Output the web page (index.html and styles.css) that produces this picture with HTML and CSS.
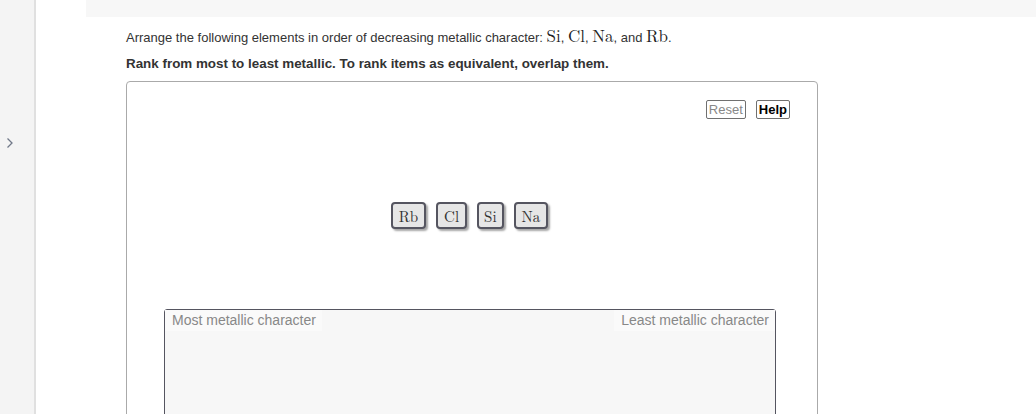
FILE: index.html
```html
<!DOCTYPE html>
<html>
<head>
<meta charset="utf-8">
<link rel="stylesheet" href="styles.css">
</head>
<body>
<div class="page">
  <aside class="sidebar">
    <svg class="chev" width="8" height="12" viewBox="0 0 8 12"><polyline points="1.5,1.5 6,6 1.5,10.5" fill="none" stroke="#707888" stroke-width="1.3"/></svg>
  </aside>
  <main class="main">
    <div class="topband"></div>
    <div class="content">
      <p class="q">Arrange the following elements in order of decreasing metallic character: <span class="m">Si</span>, <span class="m">Cl</span>, <span class="m">Na</span>, and <span class="m">Rb</span>.</p>
      <p class="instr">Rank from most to least metallic. To rank items as equivalent, overlap them.</p>
      <div class="panel">
        <div class="tools">
          <button class="btn reset">Reset</button>
          <button class="btn help">Help</button>
        </div>
        <div class="tiles">
          <span class="tile">Rb</span>
          <span class="tile">Cl</span>
          <span class="tile">Si</span>
          <span class="tile">Na</span>
        </div>
        <div class="zone">
          <span class="lbl">Most metallic character</span>
          <span class="lbl">Least metallic character</span>
        </div>
      </div>
    </div>
  </main>
</div>
</body>
</html>
```

FILE: styles.css
```css
html, body {
  margin: 0;
  padding: 0;
  background: #fff;
  height: 100%;
  overflow: hidden;
}
.page {
  display: flex;
  height: 414px;
  overflow: hidden;
  font-family: "Liberation Sans", Arial, sans-serif;
  color: #333;
}
.sidebar {
  width: 34px;
  flex: none;
  background: #f4f4f4;
  border-right: 2px solid #e0e0e0;
}
.chev {
  display: block;
  margin: 137px 0 0 6px;
}
.main {
  flex: 1;
  display: flex;
  flex-direction: column;
  min-height: 0;
}
.topband {
  flex: none;
  height: 17px;
  margin-left: 50px;
  background: #f7f7f7;
}
.content {
  flex: none;
  padding-left: 90px;
}
.q {
  margin: 8px 0 0 0;
  font-size: 13px;
  line-height: 20px;
  color: #333;
}
.m {
  font-family: "Latin Modern Roman", "Liberation Serif", "DejaVu Serif", serif;
  font-size: 17px;
  color: #222;
}
.instr {
  margin: 6px 0 0 0;
  font-size: 13.4px;
  line-height: 20px;
  font-weight: bold;
  color: #333;
}
.panel {
  margin-top: 7px;
  width: 692px;
  height: 400px;
  border: 1px solid #aaa;
  border-radius: 4px;
  box-sizing: border-box;
  display: flex;
  flex-direction: column;
}
.tools {
  display: flex;
  justify-content: flex-end;
  gap: 10px;
  padding: 18px 27px 0 0;
}
.btn {
  font-family: "Liberation Sans", Arial, sans-serif;
  font-size: 13px;
  line-height: 15px;
  padding: 1px 2px;
  background: #fff;
  border: 1px solid #707070;
  border-radius: 2px;
  height: 19px;
  box-sizing: border-box;
}
.reset { color: #888; }
.help { color: #000; font-weight: bold; }
.tiles {
  display: flex;
  justify-content: center;
  gap: 10px;
  margin-top: 83px;
  padding-right: 5px;
}
.tile {
  font-family: "Latin Modern Roman", "Liberation Serif", "DejaVu Serif", serif;
  font-size: 15px;
  line-height: 23px;
  color: #333;
  background: #e6e6e6;
  border: 2px solid #555560;
  border-radius: 4px;
  padding: 0 6px;
  box-shadow: 2px 2px 2px rgba(0,0,0,0.35);
}
.tile:nth-child(3) { padding: 0 5px; }
.zone {
  margin: 80px 0 0 37px;
  width: 612px;
  flex: 1;
  border: 1px solid #555560;
  border-radius: 3px;
  background: #f7f7f7;
  box-sizing: border-box;
  display: flex;
  justify-content: space-between;
  align-items: flex-start;
}
.lbl {
  font-size: 14px;
  line-height: 20px;
  color: #888;
  background: #fafafa;
  padding: 0 6px 1px 7px;
}
```
